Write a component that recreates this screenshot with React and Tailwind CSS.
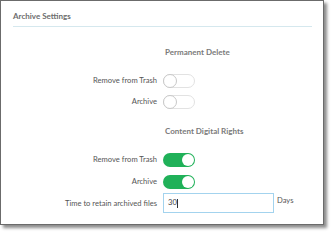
function Toggle({ on }) {
  return on ? (
    <div className="w-[32px] h-[14px] rounded-full bg-[#20b159] flex items-center justify-end pr-[1px]">
      <div className="w-[12px] h-[12px] rounded-full bg-white" />
    </div>
  ) : (
    <div className="w-[32px] h-[14px] rounded-full border border-[#e2e2e2] bg-white flex items-center">
      <div className="w-[14px] h-[14px] -ml-[1px] rounded-full border border-[#c8c8c8] bg-white" />
    </div>
  );
}

export default function App() {
  const row = 'flex items-center';
  return (
    <div className="w-[332px] h-[233px] bg-white" style={{ fontFamily: 'Lato, "Open Sans", sans-serif' }}>
      <div className="w-[324px] h-[225px] border border-[#6b6b6b] bg-white shadow-[3px_3px_3px_rgba(0,0,0,0.45)]">
        <div className="px-[12px]">
          <div className="h-[25px] flex items-center pt-[4px] text-[8px] font-bold text-[#6d6d6d]">Archive Settings</div>
          <div className="h-px bg-[#d5e8ee] w-[299px]" />
        </div>
        <div className="grid grid-cols-[156px_1fr] gap-x-[6px] text-[7.6px] text-[#555]">
          <div className="h-[47px]" />
          <div className={`${row} h-[47px] pt-[2px] pl-[2px] text-[8px] font-bold text-[#7a7a7a]`}>Permanent Delete</div>

          <div className={`${row} justify-end h-[14px]`}>Remove from Trash</div>
          <div className={`${row} h-[14px]`}><Toggle /></div>

          <div className={`${row} justify-end h-[14px] mt-[7px]`}>Archive</div>
          <div className={`${row} h-[14px] mt-[7px]`}><Toggle /></div>

          <div className="h-[37px]" />
          <div className={`${row} h-[37px] pt-[7px] pl-[2px] text-[8px] font-bold text-[#7a7a7a]`}>Content Digital Rights</div>

          <div className={`${row} justify-end h-[14px] mt-[7px]`}>Remove from Trash</div>
          <div className={`${row} h-[14px] mt-[7px]`}><Toggle on /></div>

          <div className={`${row} justify-end h-[14px] mt-[8px]`}>Archive</div>
          <div className={`${row} h-[14px] mt-[8px]`}><Toggle on /></div>

          <div className={`${row} justify-end h-[20px] mt-[5px]`}>Time to retain archived files</div>
          <div className="flex items-start h-[20px] mt-[4px]">
            <div className="w-[111px] h-[20px] border border-[#a3d3ee] flex items-center pl-[4px] text-[#444]">
              30<span className="w-px h-[9px] bg-[#333]" />
            </div>
            <span className="ml-[3px] mt-[2px]">Days</span>
          </div>
        </div>
      </div>
    </div>
  );
}
